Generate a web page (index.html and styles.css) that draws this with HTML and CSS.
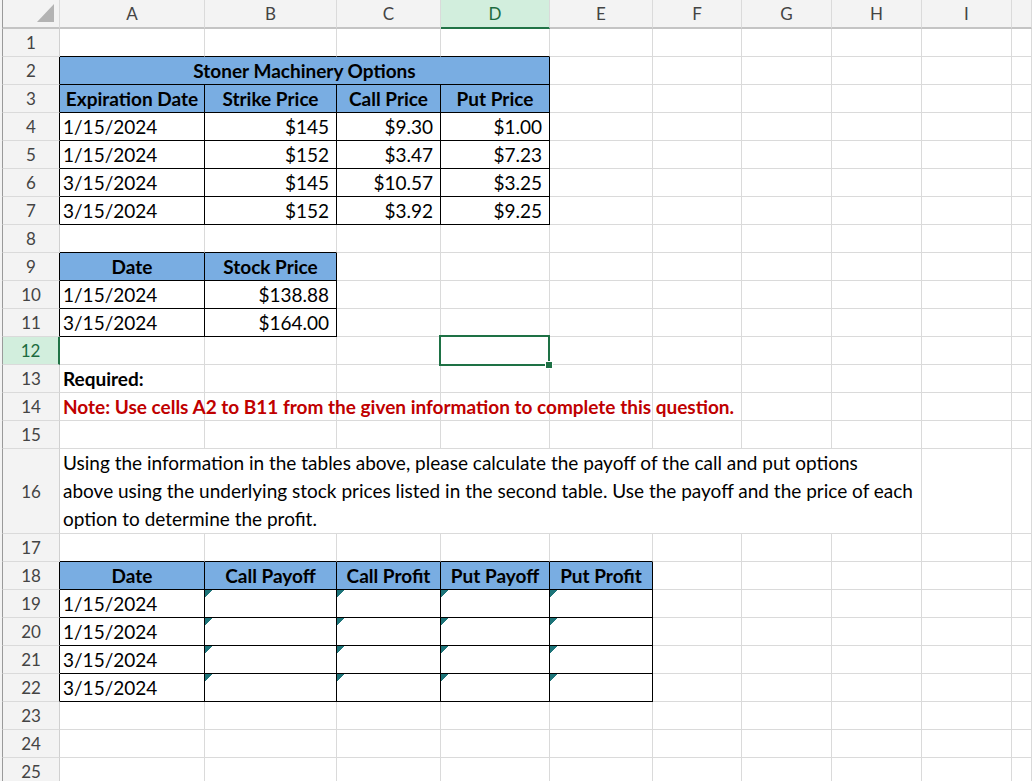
FILE: index.html
```html
<html>
<head>
<title>Stoner Machinery Options</title>
<meta name="viewport" content="width=device-width, initial-scale=1">
<link rel="stylesheet" href="styles.css">
</head>
<body>
<div class="folha">
<table class="grade">
  <colgroup>
    <col class="c-rh"><col class="c-a"><col class="c-b"><col class="c-c"><col class="c-d">
    <col class="c-e"><col class="c-f"><col class="c-g"><col class="c-h"><col class="c-i"><col class="c-j">
  </colgroup>
  <tr class="cab">
    <th class="canto"><span class="tri"></span></th>
    <th>A</th><th>B</th><th>C</th><th class="sel">D</th><th>E</th><th>F</th><th>G</th><th>H</th><th>I</th><th></th>
  </tr>
  <tr><th class="rh">1</th><td class="bb"></td><td class="bb"></td><td class="bb"></td><td class="bb"></td><td></td><td></td><td></td><td></td><td></td><td></td></tr>
  <tr><th class="rh lb">2</th><td colspan="4" class="tit cx">Stoner Machinery Options</td><td></td><td></td><td></td><td></td><td></td><td></td></tr>
  <tr><th class="rh lb">3</th><td class="tit cx">Expiration Date</td><td class="tit cx">Strike Price</td><td class="tit cx">Call Price</td><td class="tit cx">Put Price</td><td></td><td></td><td></td><td></td><td></td><td></td></tr>
  <tr><th class="rh lb">4</th><td class="cx">1/15/2024</td><td class="cx num">$145</td><td class="cx num">$9.30</td><td class="cx num">$1.00</td><td></td><td></td><td></td><td></td><td></td><td></td></tr>
  <tr><th class="rh lb">5</th><td class="cx">1/15/2024</td><td class="cx num">$152</td><td class="cx num">$3.47</td><td class="cx num">$7.23</td><td></td><td></td><td></td><td></td><td></td><td></td></tr>
  <tr><th class="rh lb">6</th><td class="cx">3/15/2024</td><td class="cx num">$145</td><td class="cx num">$10.57</td><td class="cx num">$3.25</td><td></td><td></td><td></td><td></td><td></td><td></td></tr>
  <tr><th class="rh lb">7</th><td class="cx">3/15/2024</td><td class="cx num">$152</td><td class="cx num">$3.92</td><td class="cx num">$9.25</td><td></td><td></td><td></td><td></td><td></td><td></td></tr>
  <tr><th class="rh">8</th><td class="bb"></td><td class="bb"></td><td></td><td></td><td></td><td></td><td></td><td></td><td></td><td></td></tr>
  <tr><th class="rh lb">9</th><td class="tit cx">Date</td><td class="tit cx">Stock Price</td><td></td><td></td><td></td><td></td><td></td><td></td><td></td><td></td></tr>
  <tr><th class="rh lb">10</th><td class="cx">1/15/2024</td><td class="cx num">$138.88</td><td></td><td></td><td></td><td></td><td></td><td></td><td></td><td></td></tr>
  <tr><th class="rh lb">11</th><td class="cx">3/15/2024</td><td class="cx num">$164.00</td><td></td><td></td><td></td><td></td><td></td><td></td><td></td><td></td></tr>
  <tr><th class="rh rsel">12</th><td></td><td></td><td></td><td class="ativa"><span class="cursor"><span class="alca"></span></span></td><td></td><td></td><td></td><td></td><td></td><td></td></tr>
  <tr><th class="rh">13</th><td class="neg">Required:</td><td></td><td></td><td></td><td></td><td></td><td></td><td></td><td></td><td></td></tr>
  <tr><th class="rh">14</th><td class="neg nota">Note: Use cells A2 to B11 from the given information to complete this question.</td><td></td><td></td><td></td><td></td><td></td><td></td><td></td><td></td><td></td></tr>
  <tr><th class="rh">15</th><td></td><td></td><td></td><td></td><td></td><td></td><td></td><td></td><td></td><td></td></tr>
  <tr class="alta"><th class="rh">16</th><td colspan="8" class="texto">Using the information in the tables above, please calculate the payoff of the call and put options<br>above using the underlying stock prices listed in the second table. Use the payoff and the price of each<br>option to determine the profit.</td><td></td><td></td></tr>
  <tr><th class="rh">17</th><td class="bb"></td><td class="bb"></td><td class="bb"></td><td class="bb"></td><td class="bb"></td><td></td><td></td><td></td><td></td><td></td></tr>
  <tr><th class="rh lb">18</th><td class="tit cx">Date</td><td class="tit cx">Call Payoff</td><td class="tit cx">Call Profit</td><td class="tit cx">Put Payoff</td><td class="tit cx">Put Profit</td><td></td><td></td><td></td><td></td><td></td></tr>
  <tr><th class="rh lb">19</th><td class="cx">1/15/2024</td><td class="cx erro"></td><td class="cx erro"></td><td class="cx erro"></td><td class="cx erro"></td><td></td><td></td><td></td><td></td><td></td></tr>
  <tr><th class="rh lb">20</th><td class="cx">1/15/2024</td><td class="cx erro"></td><td class="cx erro"></td><td class="cx erro"></td><td class="cx erro"></td><td></td><td></td><td></td><td></td><td></td></tr>
  <tr><th class="rh lb">21</th><td class="cx">3/15/2024</td><td class="cx erro"></td><td class="cx erro"></td><td class="cx erro"></td><td class="cx erro"></td><td></td><td></td><td></td><td></td><td></td></tr>
  <tr><th class="rh lb">22</th><td class="cx">3/15/2024</td><td class="cx erro"></td><td class="cx erro"></td><td class="cx erro"></td><td class="cx erro"></td><td></td><td></td><td></td><td></td><td></td></tr>
  <tr><th class="rh">23</th><td></td><td></td><td></td><td></td><td></td><td></td><td></td><td></td><td></td><td></td></tr>
  <tr><th class="rh">24</th><td></td><td></td><td></td><td></td><td></td><td></td><td></td><td></td><td></td><td></td></tr>
  <tr><th class="rh">25</th><td></td><td></td><td></td><td></td><td></td><td></td><td></td><td></td><td></td><td></td></tr>
</table>
</div>
</body>
</html>
```

FILE: styles.css
```css
body{
    margin: 0;
    background: #ffffff;
    overflow: hidden;
}

.folha{
    padding-left: 2px;
    background: #f3f3f3;
}

.grade{
    table-layout: fixed;
    border-collapse: separate;
    border-spacing: 0;
    width: 1030px;
    background: #fff;
    font-family: "Lato", "Liberation Sans", sans-serif;
    font-size: 19px;
    color: #000;
}

.c-rh{ width: 58px; }
.c-a{ width: 145px; }
.c-b{ width: 132px; }
.c-c{ width: 104px; }
.c-d{ width: 109px; }
.c-e{ width: 103px; }
.c-f{ width: 89px; }
.c-g{ width: 90px; }
.c-h{ width: 90px; }
.c-i{ width: 90px; }
.c-j{ width: 20px; }

.grade tr{ height: 28px; }
.grade tr.alta{ height: 84px; }

.grade td{
    padding: 0 3px 0 3px;
    border-right: 1px solid #dadada;
    border-bottom: 1px solid #dadada;
    vertical-align: bottom;
    line-height: 26px;
    white-space: nowrap;
    overflow: visible;
}

/* cabecalho das colunas */
.cab{ height: 29px !important; }
.cab th{
    background: #f3f3f3;
    color: #444;
    font-weight: normal;
    font-size: 17px;
    border-right: 1px solid #dadada;
    border-bottom: 2px solid #c4c4c4;
    padding: 0;
    height: 27px;
    line-height: 27px;
}
.cab th.sel{
    background: #d2eedd;
    color: #1c6b3f;
    border-bottom: 2px solid #217346;
}
.canto{
    border-left: 1px solid #9a9a9a;
    position: relative;
}
.tri{
    position: absolute;
    right: 5px;
    bottom: 5px;
    width: 0;
    height: 0;
    border-left: 17px solid transparent;
    border-bottom: 18px solid #b3b3b3;
}

/* numeros das linhas */
.rh{
    background: #f3f3f3;
    color: #444;
    font-weight: normal;
    font-size: 17px;
    border-left: 1px solid #9a9a9a;
    border-right: 1px solid #d0d0d0;
    border-bottom: 1px solid #dadada;
    padding: 0;
    text-align: center;
}
.rh.lb{ border-right: 1px solid #000; }
.rh.rsel{
    background: #d2eedd;
    color: #1c6b3f;
    border-right: 2px solid #217346;
}

/* tabelas com borda */
.grade td.cx{
    border-right: 1px solid #000;
    border-bottom: 1px solid #000;
}
.grade td.bb{ border-bottom: 1px solid #000; }
.tit{
    background: #79ade2;
    font-weight: bold;
    text-align: center;
}
.grade td.num{
    text-align: right;
    padding-right: 7px;
}
.neg{ font-weight: bold; }
.nota{ color: #c00000; }

.texto{
    vertical-align: middle !important;
    line-height: 28px !important;
    padding-top: 0;
    padding-bottom: 0;
}

.erro{
    background: linear-gradient(135deg, #1d7479 50%, transparent 50%) no-repeat 0 0 / 8px 8px;
}

/* celula ativa D12 */
.ativa{ position: relative; }
.cursor{
    position: absolute;
    left: -2px;
    top: -2px;
    right: -1px;
    bottom: -2px;
    border: 2px solid #1e7145;
}
.alca{
    position: absolute;
    right: -5px;
    bottom: -5px;
    width: 6px;
    height: 6px;
    background: #1e7145;
    border: 1px solid #fff;
}
```
